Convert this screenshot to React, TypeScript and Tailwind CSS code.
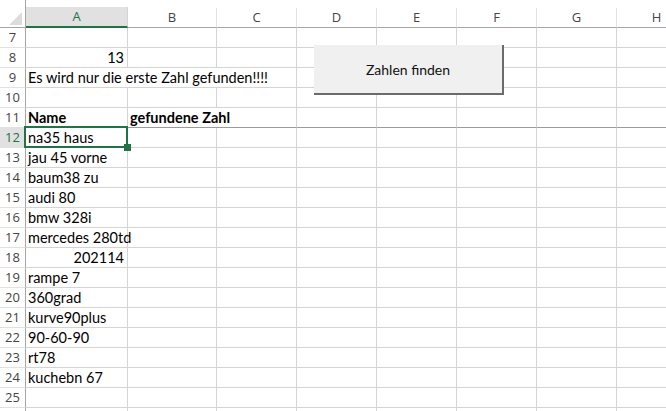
import React from 'react';

// column widths (incl. right gridline)
const COLS = [
  { key: 'A', w: 'w-[102px]' },
  { key: 'B', w: 'w-[89px]' },
  { key: 'C', w: 'w-[80px]' },
  { key: 'D', w: 'w-[80px]' },
  { key: 'E', w: 'w-[80px]' },
  { key: 'F', w: 'w-[80px]' },
  { key: 'G', w: 'w-[80px]' },
  { key: 'H', w: 'w-[80px]' },
];

const colA: Record<number, { text: string; right?: boolean }> = {
  8: { text: '13', right: true },
  12: { text: 'na35 haus' },
  13: { text: 'jau 45 vorne' },
  14: { text: 'baum38 zu' },
  15: { text: 'audi 80' },
  16: { text: 'bmw 328i' },
  17: { text: 'mercedes 280td' },
  18: { text: '202114', right: true },
  19: { text: 'rampe 7' },
  20: { text: '360grad' },
  21: { text: 'kurve90plus' },
  22: { text: '90-60-90' },
  23: { text: 'rt78' },
  24: { text: 'kuchebn 67' },
};

const ROWS = Array.from({ length: 20 }, (_, i) => i + 7);

const cellText = "font-['Lato',sans-serif] text-[14.5px] leading-none text-black whitespace-nowrap";

function RowHeader({ n, active }: { n: number; active: boolean }) {
  return (
    <div
      className={`w-[26px] shrink-0 h-full flex items-center justify-center border-r border-r-[#a6a6a6] border-b border-b-[#e1e1e1] font-['Open_Sans',sans-serif] text-[13px] ${
        active ? 'bg-[#e1e1e1] text-[#217346]' : 'bg-white text-[#444]'
      }`}
    >
      {n <= 25 ? n : null}
    </div>
  );
}

function Row({ n }: { n: number }) {
  const bottom = n === 11 ? 'border-b-[#9b9b9b]' : 'border-b-[#d4d4d4]';
  const a = colA[n];

  if (n === 9) {
    return (
      <div className="flex h-[20px]">
        <RowHeader n={n} active={false} />
        <div className={`w-[271px] shrink-0 border-r border-r-[#d4d4d4] border-b ${bottom} flex items-end pb-[2px] pl-[2px] ${cellText}`}>
          Es wird nur die erste Zahl gefunden!!!!
        </div>
        {COLS.slice(3).map((c) => (
          <div key={c.key} className={`${c.w} shrink-0 border-r border-r-[#d4d4d4] border-b ${bottom}`} />
        ))}
      </div>
    );
  }

  if (n === 11) {
    return (
      <div className="flex h-[20px]">
        <RowHeader n={n} active={false} />
        <div className={`w-[102px] shrink-0 border-r border-r-[#d4d4d4] border-b ${bottom} flex items-end pb-[2px] pl-[2px] font-bold ${cellText}`}>
          Name
        </div>
        <div className={`w-[169px] shrink-0 border-r border-r-[#d4d4d4] border-b ${bottom} flex items-end pb-[2px] pl-[2px] font-bold ${cellText}`}>
          gefundene Zahl
        </div>
        {COLS.slice(3).map((c) => (
          <div key={c.key} className={`${c.w} shrink-0 border-r border-r-[#d4d4d4] border-b ${bottom}`} />
        ))}
      </div>
    );
  }

  return (
    <div className="flex h-[20px]">
      <RowHeader n={n} active={n === 12} />
      {COLS.map((c, i) => (
        <div
          key={c.key}
          className={`${c.w} shrink-0 relative border-r border-r-[#d4d4d4] border-b ${bottom} flex items-end pb-[2px] ${
            i === 0 && a?.right ? 'justify-end pr-[3px]' : 'pl-[2px]'
          } ${cellText}`}
        >
          {i === 0 && a ? a.text : null}
          {i === 0 && n === 12 && (
            <>
              <div className="absolute -left-[2px] -top-[2px] -right-px -bottom-px border-2 border-[#217346] pointer-events-none z-10" />
              <div className="absolute -right-[4px] -bottom-[4px] w-[7px] h-[7px] bg-[#217346] z-20" />
            </>
          )}
        </div>
      ))}
    </div>
  );
}

export default function App() {
  return (
    <div className="relative w-[666px] h-[411px] overflow-hidden bg-white select-none">
      {/* column headers */}
      <div className="flex h-[28px]">
        <div className="w-[26px] shrink-0 h-full border-r border-r-[#a6a6a6] border-b border-b-[#a6a6a6] relative">
          <svg className="absolute left-[9px] top-[12px]" width="13" height="13" viewBox="0 0 13 13">
            <polygon points="13,0 13,13 0,13" fill="#dcdcdc" />
          </svg>
        </div>
        {COLS.map((c) => (
          <div key={c.key} className={`${c.w} shrink-0 h-full flex flex-col`}>
            <div className="h-[8px] bg-white" />
            {c.key === 'A' ? (
              <div className="flex-1 flex items-center justify-center bg-[#e1e1e1] border-b-2 border-b-[#217346] border-r border-r-[#d4d4d4] font-['Open_Sans',sans-serif] text-[13px] text-[#217346]">
                {c.key}
              </div>
            ) : (
              <div className="flex-1 flex items-center justify-center border-b border-b-[#a6a6a6] border-r border-r-[#e1e1e1] font-['Open_Sans',sans-serif] text-[13px] text-[#444]">
                {c.key}
              </div>
            )}
          </div>
        ))}
      </div>

      {ROWS.map((n) => (
        <Row key={n} n={n} />
      ))}

      {/* form button over the sheet */}
      <button
        type="button"
        className="absolute left-[314px] top-[45px] w-[190px] h-[50px] bg-[#f0f0f0] border-r-2 border-b-2 border-r-[#6b6b6b] border-b-[#6b6b6b] flex items-center justify-center font-['Lato',sans-serif] text-[14px] text-[#111]"
      >
        Zahlen finden
      </button>
    </div>
  );
}
